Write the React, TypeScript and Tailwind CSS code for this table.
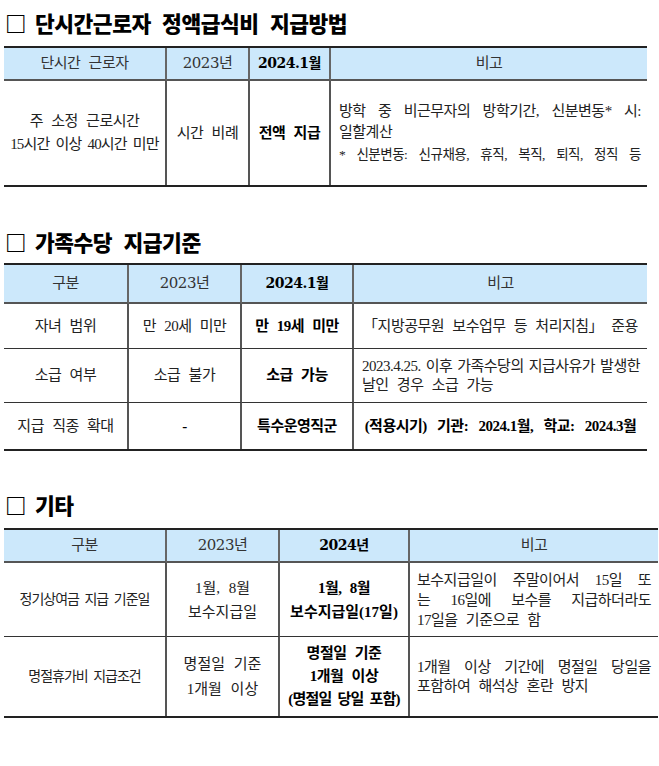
import React from "react";

const base =
  "font-['Liberation_Serif','Noto_Sans_CJK_KR',serif] text-[15px] tracking-[-0.5px] [word-spacing:5px] text-[#222]";
const headFont = "font-['DejaVu_Serif','Noto_Sans_CJK_KR',serif]";
const boldTxt = "font-bold text-black";
const hCell =
  "flex items-center justify-center bg-[#cce8fb] border-b-2 border-b-[#555] border-r-2 border-r-[#666] text-[#333]";
const hCellLast =
  "flex items-center justify-center bg-[#cce8fb] border-b-2 border-b-[#555] text-[#333]";
const bCell = "flex items-center justify-center text-center border-r-2 border-r-[#555]";
const bCellSep = "flex items-center justify-center text-center border-r-2 border-r-[#555] border-b border-b-[#333]";
const noteSep = "flex flex-col justify-center border-b border-b-[#333]";
const fullLine = "whitespace-nowrap text-justify [text-align-last:justify] [word-spacing:0px]";

function Title({ children, h }: { children: React.ReactNode; h: string }) {
  return (
    <div
      className={`flex items-center ${h} pl-[1px] font-['Noto_Sans_CJK_KR',sans-serif] font-black text-[21.5px] tracking-[-0.5px] [word-spacing:7px] text-black`}
    >
      <span className="mr-[9px]">□</span>
      <span>{children}</span>
    </div>
  );
}

export default function App() {
  return (
    <div className={`w-[659px] min-h-[766px] bg-white pl-[4px] ${base}`}>
      {/* Section 1 */}
      <Title h="h-[46px]">단시간근로자 정액급식비 지급방법</Title>
      <div className="grid w-[643px] grid-cols-[163px_83px_81px_316px] grid-rows-[33px_104px] border-y-2 border-[#222]">
        <div className={hCell}>단시간 근로자</div>
        <div className={`${hCell} ${headFont} text-[15px]`}>2023년</div>
        <div className={`${hCell} ${headFont} ${boldTxt} text-[14px]`}>2024.1월</div>
        <div className={hCellLast}>비고</div>

        <div className={`${bCell} flex-col leading-[23px]`}>
          <div>주 소정 근로시간</div>
          <div className="tracking-[-0.8px] [word-spacing:3px]">15시간 이상 40시간 미만</div>
        </div>
        <div className={bCell}>시간 비례</div>
        <div className={`${bCell} ${boldTxt}`}>전액 지급</div>
        <div className="flex flex-col justify-center pl-[8px] pr-[6px] leading-[21px]">
          <div className={fullLine}>방학 중 비근무자의 방학기간, 신분변동* 시:</div>
          <div>일할계산</div>
          <div className={`${fullLine} text-[13.5px] mt-[1px]`}>* 신분변동: 신규채용, 휴직, 복직, 퇴직, 정직 등</div>
        </div>
      </div>

      {/* Section 2 */}
      <div className="mt-[34px]">
        <Title h="h-[42px]">가족수당 지급기준</Title>
      </div>
      <div className="grid w-[643px] grid-cols-[125px_113px_112px_293px] grid-rows-[39px_45px_54px_46px] border-y-2 border-[#222]">
        <div className={hCell}>구분</div>
        <div className={`${hCell} ${headFont} text-[15px]`}>2023년</div>
        <div className={`${hCell} ${headFont} ${boldTxt} text-[14px]`}>2024.1월</div>
        <div className={hCellLast}>비고</div>

        <div className={bCellSep}>자녀 범위</div>
        <div className={bCellSep}>만 20세 미만</div>
        <div className={`${bCellSep} ${boldTxt}`}>만 19세 미만</div>
        <div className={`${noteSep} items-center`}>「지방공무원 보수업무 등 처리지침」 준용</div>

        <div className={bCellSep}>소급 여부</div>
        <div className={bCellSep}>소급 불가</div>
        <div className={`${bCellSep} ${boldTxt}`}>소급 가능</div>
        <div className={`${noteSep} pl-[8px] pr-[7px] leading-[19px]`}>
          <div className={fullLine}>2023.4.25. 이후 가족수당의 지급사유가 발생한</div>
          <div>날인 경우 소급 가능</div>
        </div>

        <div className={bCell}>지급 직종 확대</div>
        <div className={`${bCell} ${boldTxt}`}>-</div>
        <div className={`${bCell} ${boldTxt}`}>특수운영직군</div>
        <div className={`flex items-center justify-center whitespace-nowrap ${boldTxt} [word-spacing:7px]`}>
          (적용시기) 기관: 2024.1월, 학교: 2024.3월
        </div>
      </div>

      {/* Section 3 */}
      <div className="mt-[31px]">
        <Title h="h-[46px]">기타</Title>
      </div>
      <div className="grid w-[654px] grid-cols-[163px_113px_130px_248px] grid-rows-[33px_74px_79px] border-y-2 border-[#222]">
        <div className={hCell}>구분</div>
        <div className={`${hCell} ${headFont} text-[15px]`}>2023년</div>
        <div className={`${hCell} ${headFont} ${boldTxt} text-[14px]`}>2024년</div>
        <div className={hCellLast}>비고</div>

        <div className={`${bCellSep} text-[14px] tracking-[-1px] [word-spacing:3px]`}>정기상여금 지급 기준일</div>
        <div className={`${bCellSep} flex-col leading-[24px] tracking-[0px]`}>
          <div>1월, 8월</div>
          <div>보수지급일</div>
        </div>
        <div className={`${bCellSep} ${boldTxt} flex-col leading-[24px]`}>
          <div>1월, 8월</div>
          <div className="tracking-[0px]">보수지급일(17일)</div>
        </div>
        <div className={`${noteSep} pl-[7px] pr-[7px] leading-[20px]`}>
          <div className={fullLine}>보수지급일이 주말이어서 15일 또</div>
          <div className={fullLine}>는 16일에 보수를 지급하더라도</div>
          <div>17일을 기준으로 함</div>
        </div>

        <div className={`${bCell} text-[14px] tracking-[-1px] [word-spacing:3px]`}>명절휴가비 지급조건</div>
        <div className={`${bCell} flex-col leading-[25px] tracking-[0px]`}>
          <div>명절일 기준</div>
          <div>1개월 이상</div>
        </div>
        <div className={`${bCell} ${boldTxt} flex-col leading-[23px]`}>
          <div>명절일 기준</div>
          <div>1개월 이상</div>
          <div className="tracking-[-0.8px] [word-spacing:3px]">(명절일 당일 포함)</div>
        </div>
        <div className="flex flex-col justify-center pl-[7px] pr-[7px] leading-[19px]">
          <div className={fullLine}>1개월 이상 기간에 명절일 당일을</div>
          <div>포함하여 해석상 혼란 방지</div>
        </div>
      </div>
    </div>
  );
}
